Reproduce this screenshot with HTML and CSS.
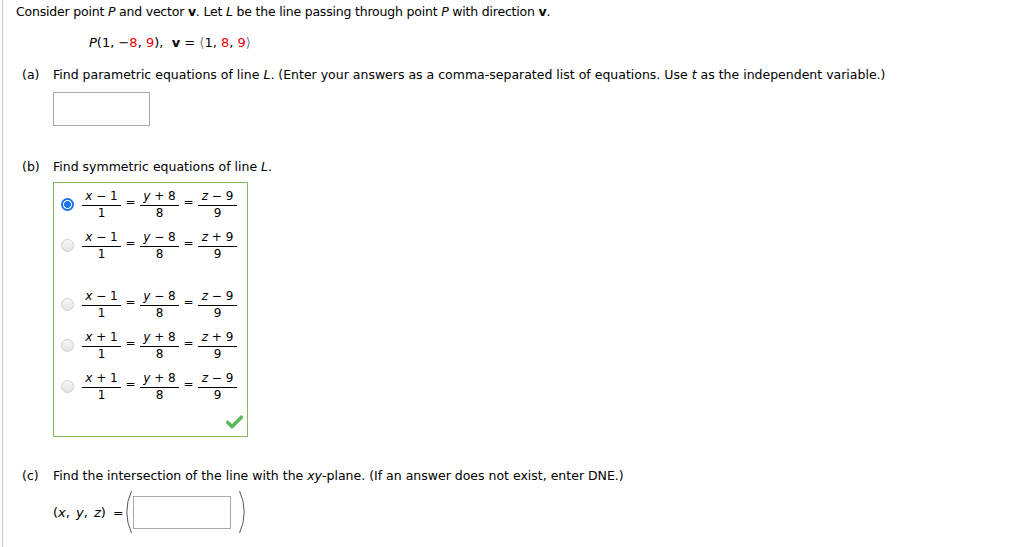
FILE: index.html
```html
<!DOCTYPE html>
<html>
<head>
<meta charset="utf-8">
<link rel="stylesheet" href="styles.css">
</head>
<body>
<div class="page">
  <p class="intro">Consider point <i>P</i> and vector <b>v</b>. Let <i>L</i> be the line passing through point <i>P</i> with direction <b>v</b>.</p>
  <p class="given"><i>P</i>(1, −<span class="red">8</span>, <span class="red">9</span>),&nbsp; <b>v</b> = <span class="ang">⟨</span>1, <span class="red">8</span>, <span class="red">9</span><span class="ang">⟩</span></p>

  <div class="part">
    <span class="label">(a)</span>
    <span class="qtext">Find parametric equations of line <i>L</i>. (Enter your answers as a comma-separated list of equations. Use <i>t</i> as the independent variable.)</span>
  </div>
  <div class="answer-a"><div class="box"></div></div>

  <div class="part part-b">
    <span class="label">(b)</span>
    <span class="qtext">Find symmetric equations of line <i>L</i>.</span>
  </div>
  <div class="choices">
    <div class="choice">
      <span class="radio on"></span>
      <span class="eq">
        <span class="frac"><span class="num"><i>x</i> − 1</span><span class="den">1</span></span>
        <span class="eqs">=</span>
        <span class="frac"><span class="num"><i>y</i> + 8</span><span class="den">8</span></span>
        <span class="eqs">=</span>
        <span class="frac"><span class="num"><i>z</i> − 9</span><span class="den">9</span></span>
      </span>
    </div>
    <div class="choice">
      <span class="radio"></span>
      <span class="eq">
        <span class="frac"><span class="num"><i>x</i> − 1</span><span class="den">1</span></span>
        <span class="eqs">=</span>
        <span class="frac"><span class="num"><i>y</i> − 8</span><span class="den">8</span></span>
        <span class="eqs">=</span>
        <span class="frac"><span class="num"><i>z</i> + 9</span><span class="den">9</span></span>
      </span>
    </div>
    <div class="choice gap-big">
      <span class="radio"></span>
      <span class="eq">
        <span class="frac"><span class="num"><i>x</i> − 1</span><span class="den">1</span></span>
        <span class="eqs">=</span>
        <span class="frac"><span class="num"><i>y</i> − 8</span><span class="den">8</span></span>
        <span class="eqs">=</span>
        <span class="frac"><span class="num"><i>z</i> − 9</span><span class="den">9</span></span>
      </span>
    </div>
    <div class="choice">
      <span class="radio"></span>
      <span class="eq">
        <span class="frac"><span class="num"><i>x</i> + 1</span><span class="den">1</span></span>
        <span class="eqs">=</span>
        <span class="frac"><span class="num"><i>y</i> + 8</span><span class="den">8</span></span>
        <span class="eqs">=</span>
        <span class="frac"><span class="num"><i>z</i> + 9</span><span class="den">9</span></span>
      </span>
    </div>
    <div class="choice">
      <span class="radio"></span>
      <span class="eq">
        <span class="frac"><span class="num"><i>x</i> + 1</span><span class="den">1</span></span>
        <span class="eqs">=</span>
        <span class="frac"><span class="num"><i>y</i> + 8</span><span class="den">8</span></span>
        <span class="eqs">=</span>
        <span class="frac"><span class="num"><i>z</i> − 9</span><span class="den">9</span></span>
      </span>
    </div>
    <div class="check">
      <svg width="17" height="14" viewBox="0 0 17 14"><path d="M1.8 7.5 L6.2 11.6 L15.4 2.2" fill="none" stroke="#5cb85c" stroke-width="3.6" stroke-linecap="round" stroke-linejoin="round"/></svg>
    </div>
  </div>

  <div class="part part-c">
    <span class="label">(c)</span>
    <span class="qtext">Find the intersection of the line with the <i>xy</i>-plane. (If an answer does not exist, enter DNE.)</span>
  </div>
  <div class="answer-c">
    <span class="xyz">(<i>x</i>, <i>y</i>, <i>z</i>)</span><span class="xyz-eq">=</span>
    <svg class="paren" width="6" height="44" viewBox="0 0 6 44"><path d="M5.5 1 Q0.8 11 0.8 22 Q0.8 33 5.5 43" fill="none" stroke="#555" stroke-width="1"/></svg>
    <div class="box box-c"></div>
    <svg class="paren paren-r" width="6" height="44" viewBox="0 0 6 44"><path d="M0.5 1 Q5.2 11 5.2 22 Q5.2 33 0.5 43" fill="none" stroke="#555" stroke-width="1"/></svg>
  </div>
</div>
</body>
</html>
```

FILE: styles.css
```css
html, body {
  margin: 0;
  padding: 0;
  background: #fff;
}
body {
  font-family: "DejaVu Sans", Verdana, sans-serif;
  font-size: 12.5px;
  color: #000;
}
.page {
  margin-left: 2px;
  border-left: 1px solid #c8c8c8;
  height: 547px;
  box-sizing: border-box;
  padding-top: 4px;
}
p { margin: 0; }
.intro {
  line-height: 16px;
  padding-left: 13px;
  letter-spacing: -0.2px;
}
.given {
  line-height: 16px;
  margin-top: 15px;
  padding-left: 86px;
  font-size: 13px;
}
.red { color: #e8000b; }
.ang { color: #777; }
.part {
  display: flex;
  line-height: 16px;
  margin-top: 16px;
  padding-left: 19px;
}
.label {
  width: 31px;
  flex: none;
}
.answer-a {
  padding-left: 50px;
  margin-top: 9px;
}
.box {
  width: 95px;
  height: 32px;
  border: 1px solid #a9a9a9;
  background: #fff;
}
.part-b { margin-top: 33px; }
.choices {
  margin-left: 50px;
  margin-top: 7px;
  width: 195px;
  height: 255px;
  border: 1px solid #86b75a;
  box-sizing: border-box;
  position: relative;
  padding-top: 6px;
}
.choice {
  display: flex;
  align-items: center;
  height: 31px;
  margin-bottom: 10px;
}
.choice.gap-big { margin-top: 28px; }
.radio {
  width: 13px;
  height: 13px;
  border-radius: 50%;
  border: 1px solid #cfcfcf;
  background: linear-gradient(#f7f7f7, #e4e4e4);
  margin-left: 7px;
  margin-right: 8px;
  flex: none;
  box-sizing: border-box;
}
.radio.on {
  border: 2px solid #1a73e8;
  background: radial-gradient(circle, #1a73e8 0 3.2px, #fff 3.7px);
}
.eq {
  display: flex;
  align-items: center;
  font-size: 12px;
}
.frac {
  display: inline-flex;
  flex-direction: column;
  align-items: stretch;
  text-align: center;
  width: 39px;
}
.num {
  line-height: 15px;
  border-bottom: 1px solid #000;
  padding-bottom: 1px;
}
.den {
  line-height: 15px;
}
.eqs {
  width: 19px;
  text-align: center;
  line-height: 15px;
  padding-bottom: 5px;
}
.check {
  position: absolute;
  right: 4px;
  bottom: 7px;
  line-height: 0;
}
.part-c { margin-top: 31px; }
.answer-c {
  display: flex;
  align-items: center;
  padding-left: 50px;
  margin-top: 6px;
  height: 44px;
}
.xyz {
  font-size: 13px;
  word-spacing: 2px;
}
.xyz-eq {
  font-size: 12.5px;
  margin-left: 7px;
  margin-right: 3px;
}
.paren { flex: none; }
.box-c {
  width: 96px;
  height: 31px;
  margin: 0 8px 0 1px;
}
```
